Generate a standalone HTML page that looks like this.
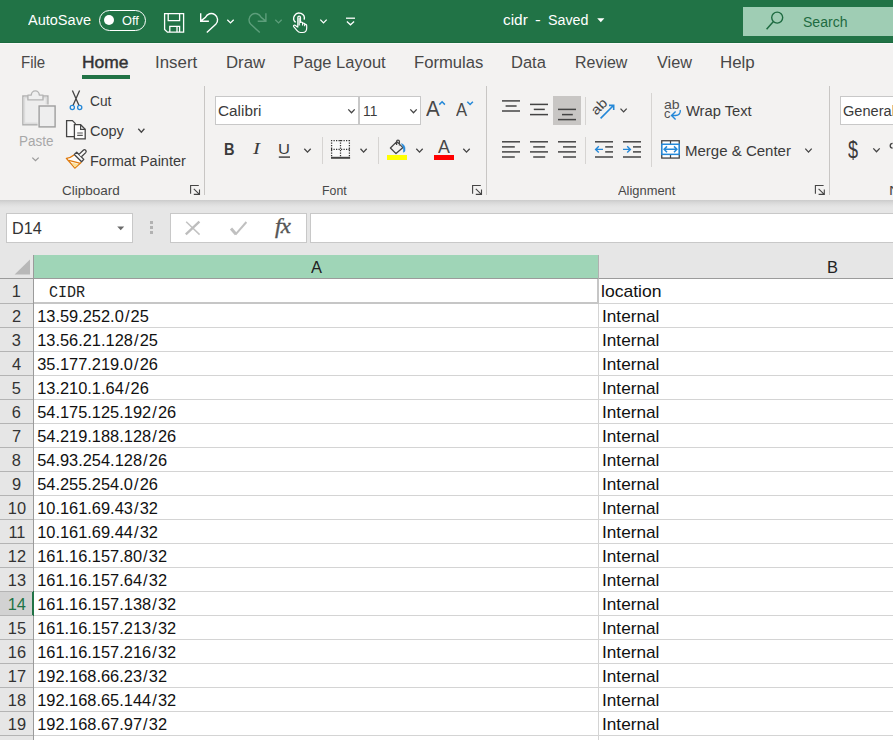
<!DOCTYPE html>
<html lang="en"><head><meta charset="utf-8"><title>cidr - Excel</title>
<style>
html,body{margin:0;padding:0;}
body{width:893px;height:740px;overflow:hidden;background:#fff;font-family:"Liberation Sans",sans-serif;}
#app{position:relative;width:893px;height:740px;overflow:hidden;background:#fff;}
.t{position:absolute;white-space:pre;line-height:30px;height:30px;transform-origin:0 50%;}
.b{position:absolute;}
#title{left:0;top:0;width:893px;height:43px;background:#217346;}
#ribbon{left:0;top:43px;width:893px;height:157px;background:#f3f2f1;}
#shadow{left:0;top:200px;width:893px;height:8px;background:linear-gradient(#cbcbcb,#d9d9d9 35%,#e3e3e3 75%,#e6e6e6);}
#fbar{left:0;top:208px;width:893px;height:47px;background:#e6e6e6;}
.box{background:#fff;border:1px solid #c8c8c8;box-sizing:border-box;}
.sep{width:1px;background:#c8c6c4;}
svg{position:absolute;overflow:visible;}
.hl{position:absolute;left:34px;width:859px;height:1px;background:#d6d6d6;}

</style></head>
<body>
<div id="app">
<div class="b" id="title"></div>
<div class="b" id="ribbon"></div>
<div class="b" id="shadow"></div>
<div class="b" id="fbar"></div>
<div class="b" style="left:0px;top:42px;width:893px;height:1px;background:#1b6b3f;"></div>
<div class="b" style="left:0px;top:43px;width:893px;height:1px;background:#fbfaf9;"></div>
<div class="b" style="left:743px;top:7px;width:150px;height:29px;background:#9fcdb4;"></div>
<div class="b" style="left:99px;top:10px;width:47px;height:20.5px;border:1.6px solid #fff;border-radius:11px;box-sizing:border-box;"></div>
<div class="b" style="left:104px;top:15.2px;width:10px;height:10px;border-radius:5px;background:#fff;"></div>
<div class="b" style="left:82px;top:75px;width:47.5px;height:3.6px;background:#217346;"></div>
<div class="b" style="left:204px;top:86px;width:1px;height:108.5px;background:#c8c6c4;"></div>
<div class="b" style="left:486px;top:86px;width:1px;height:108.5px;background:#c8c6c4;"></div>
<div class="b" style="left:829px;top:86px;width:1px;height:108.5px;background:#c8c6c4;"></div>
<div class="b" style="left:322px;top:137px;width:1px;height:27px;background:#d6d4d2;"></div>
<div class="b" style="left:378px;top:137px;width:1px;height:27px;background:#d6d4d2;"></div>
<div class="b" style="left:585px;top:97px;width:1px;height:27.5px;background:#d6d4d2;"></div>
<div class="b" style="left:585px;top:137px;width:1px;height:27px;background:#d6d4d2;"></div>
<div class="b" style="left:651px;top:93px;width:1px;height:74px;background:#d6d4d2;"></div>
<div class="b box" style="left:215px;top:96px;width:144px;height:29px;"></div>
<div class="b box" style="left:359px;top:96px;width:62px;height:29px;"></div>
<div class="b box" style="left:840px;top:96px;width:60px;height:29px;"></div>
<div class="b" style="left:553px;top:96px;width:28px;height:29px;background:#c8c6c4;"></div>
<div class="b box" style="left:6px;top:213px;width:127px;height:30px;"></div>
<div class="b box" style="left:170px;top:213px;width:137px;height:30px;"></div>
<div class="b box" style="left:310px;top:213px;width:590px;height:30px;"></div>
<div class="b" style="left:0px;top:255px;width:893px;height:24px;background:#e6e6e6;"></div>
<div class="b" style="left:34px;top:255px;width:564px;height:23px;background:#9fd5b7;"></div>
<div class="b" style="left:0px;top:278px;width:893px;height:1px;background:#9b9b9b;"></div>
<div class="b" style="left:598px;top:255px;width:1px;height:24px;background:#b0b0b0;"></div>
<div class="b" style="left:0px;top:279px;width:33px;height:461px;background:#e6e6e6;"></div>
<div class="b" style="left:0px;top:592px;width:33px;height:23px;background:#d2d2d2;"></div>
<div class="b" style="left:33px;top:255px;width:1px;height:485px;background:#9b9b9b;"></div>
<div class="b" style="left:32px;top:591px;width:2px;height:25px;background:#217346;"></div>
<div class="b" style="left:34px;top:303px;width:859px;height:1px;background:#d4d4d4;"></div>
<div class="b" style="left:0px;top:303px;width:33px;height:1px;background:#b4b4b4;"></div>
<div class="b" style="left:34px;top:327px;width:859px;height:1px;background:#d4d4d4;"></div>
<div class="b" style="left:0px;top:327px;width:33px;height:1px;background:#b4b4b4;"></div>
<div class="b" style="left:34px;top:351px;width:859px;height:1px;background:#d4d4d4;"></div>
<div class="b" style="left:0px;top:351px;width:33px;height:1px;background:#b4b4b4;"></div>
<div class="b" style="left:34px;top:375px;width:859px;height:1px;background:#d4d4d4;"></div>
<div class="b" style="left:0px;top:375px;width:33px;height:1px;background:#b4b4b4;"></div>
<div class="b" style="left:34px;top:399px;width:859px;height:1px;background:#d4d4d4;"></div>
<div class="b" style="left:0px;top:399px;width:33px;height:1px;background:#b4b4b4;"></div>
<div class="b" style="left:34px;top:423px;width:859px;height:1px;background:#d4d4d4;"></div>
<div class="b" style="left:0px;top:423px;width:33px;height:1px;background:#b4b4b4;"></div>
<div class="b" style="left:34px;top:447px;width:859px;height:1px;background:#d4d4d4;"></div>
<div class="b" style="left:0px;top:447px;width:33px;height:1px;background:#b4b4b4;"></div>
<div class="b" style="left:34px;top:471px;width:859px;height:1px;background:#d4d4d4;"></div>
<div class="b" style="left:0px;top:471px;width:33px;height:1px;background:#b4b4b4;"></div>
<div class="b" style="left:34px;top:495px;width:859px;height:1px;background:#d4d4d4;"></div>
<div class="b" style="left:0px;top:495px;width:33px;height:1px;background:#b4b4b4;"></div>
<div class="b" style="left:34px;top:519px;width:859px;height:1px;background:#d4d4d4;"></div>
<div class="b" style="left:0px;top:519px;width:33px;height:1px;background:#b4b4b4;"></div>
<div class="b" style="left:34px;top:543px;width:859px;height:1px;background:#d4d4d4;"></div>
<div class="b" style="left:0px;top:543px;width:33px;height:1px;background:#b4b4b4;"></div>
<div class="b" style="left:34px;top:567px;width:859px;height:1px;background:#d4d4d4;"></div>
<div class="b" style="left:0px;top:567px;width:33px;height:1px;background:#b4b4b4;"></div>
<div class="b" style="left:34px;top:591px;width:859px;height:1px;background:#d4d4d4;"></div>
<div class="b" style="left:0px;top:591px;width:33px;height:1px;background:#b4b4b4;"></div>
<div class="b" style="left:34px;top:615px;width:859px;height:1px;background:#d4d4d4;"></div>
<div class="b" style="left:0px;top:615px;width:33px;height:1px;background:#b4b4b4;"></div>
<div class="b" style="left:34px;top:639px;width:859px;height:1px;background:#d4d4d4;"></div>
<div class="b" style="left:0px;top:639px;width:33px;height:1px;background:#b4b4b4;"></div>
<div class="b" style="left:34px;top:663px;width:859px;height:1px;background:#d4d4d4;"></div>
<div class="b" style="left:0px;top:663px;width:33px;height:1px;background:#b4b4b4;"></div>
<div class="b" style="left:34px;top:687px;width:859px;height:1px;background:#d4d4d4;"></div>
<div class="b" style="left:0px;top:687px;width:33px;height:1px;background:#b4b4b4;"></div>
<div class="b" style="left:34px;top:711px;width:859px;height:1px;background:#d4d4d4;"></div>
<div class="b" style="left:0px;top:711px;width:33px;height:1px;background:#b4b4b4;"></div>
<div class="b" style="left:34px;top:735px;width:859px;height:1px;background:#d4d4d4;"></div>
<div class="b" style="left:0px;top:735px;width:33px;height:1px;background:#b4b4b4;"></div>
<div class="b" style="left:598px;top:279px;width:1px;height:461px;background:#d4d4d4;"></div>
<div class="b" style="left:34px;top:302px;width:565px;height:2px;background:#c6c6c6;"></div>
<div class="b" style="left:597px;top:279px;width:2px;height:25px;background:#c6c6c6;"></div>
<div class="b" style="left:387px;top:155px;width:20.4px;height:5px;background:#ffff00;"></div>
<div class="b" style="left:434px;top:155px;width:20.4px;height:5px;background:#ff0000;"></div>
<svg style="left:0;top:0" width="893" height="740" viewBox="0 0 893 740" fill="none" stroke-linecap="butt" stroke-linejoin="miter"><path d="M164.6 13.6 H183.6 V32.2 H167.4 L164.6 29.4 Z M168.2 13.6 V20.6 H179.6 V13.6 M169.8 32.2 V26.4 H179.6 V32.2 M177 26.4 V32.2" stroke="#fff" stroke-width="1.3"/><path d="M206.8 32.6 L215.75 24.25 A6.3 6.3 0 1 0 205.5 17.3 L201 20.9 M200.7 13.2 V21.2 H208.9" stroke="#fff" stroke-width="1.4"/><path d="M227.30 19.8 L230.50 22.9 L233.70 19.8" stroke="#fff" stroke-width="1.3"/><g transform="translate(466.6 0) scale(-1 1)"><path d="M206.8 32.6 L215.75 24.25 A6.3 6.3 0 1 0 205.5 17.3 L201 20.9 M200.7 13.2 V21.2 H208.9" stroke="#5d9e7b" stroke-width="1.4"/></g><path d="M275.30 19.8 L278.50 22.9 L281.70 19.8" stroke="#5d9e7b" stroke-width="1.3"/><path d="M295.6 22.4 A5.3 5.3 0 1 1 304.2 19.6" stroke="#fff" stroke-width="1.4"/><path d="M297.8 27.6 V17.4 a1.35 1.35 0 0 1 2.7 0 V23 M300.5 22.3 c1.2 -0.4 2 0 2.1 1 c1.1 -0.4 2 0 2.1 1 c1.2 -0.3 2 0.3 2 1.4 V28 c0 2.6 -1.6 4.5 -4 4.5 h-2.2 c-1.5 0 -2.4 -0.6 -3.4 -1.8 l-3.4 -4 c-0.7 -0.9 0.4 -2 1.4 -1.4 l2.7 1.9 M302.6 23.3 V25.6 M304.7 24.3 V26.2" stroke="#fff" stroke-width="1.2" stroke-linejoin="round"/><rect x="298.2" y="17.5" width="1.9" height="8" fill="#cfe3d7"/><path d="M320.30 19.6 L323.50 22.9 L326.70 19.6" stroke="#fff" stroke-width="1.3"/><path d="M346 18.2 H355" stroke="#fff" stroke-width="1.3"/><path d="M346.90 21.6 L350.50 24.8 L354.10 21.6" stroke="#fff" stroke-width="1.3"/><path d="M597.2 18.2 H604.4 L600.8 22.2 Z" fill="#fff"/><circle cx="777.2" cy="17.6" r="5.5" stroke="#1e6b41" stroke-width="1.4"/><path d="M773.2 21.8 L766.6 29.2" stroke="#1e6b41" stroke-width="1.5"/><rect x="22.9" y="96" width="25" height="28.8" fill="#ededed" stroke="#adadad" stroke-width="1.4"/><rect x="24.4" y="97.5" width="22" height="25.8" fill="none" stroke="#dcdcdc" stroke-width="1.5"/><path d="M27.9 95.1 H31.3 a4 4.2 0 0 1 8 0 H43 V99.9 H27.9 Z" fill="#efefef" stroke="#b4b4b4" stroke-width="1.4" stroke-linejoin="round"/><rect x="37.6" y="104.5" width="19" height="24" fill="#f3f2f1"/><rect x="39.1" y="106" width="16" height="20.9" fill="#eeeeee" stroke="#9e9e9e" stroke-width="1.4"/><path d="M32.30 157.6 L35.50 160.7 L38.70 157.6" stroke="#9a9a9a" stroke-width="1.3"/><path d="M72.4 90.4 L78.9 105.2 M79.6 90.4 L73.1 105.2" stroke="#444" stroke-width="1.3"/><circle cx="72.3" cy="107.5" r="2.1" stroke="#2488d8" stroke-width="1.3"/><circle cx="79.7" cy="107.5" r="2.1" stroke="#2488d8" stroke-width="1.3"/><path d="M74 136.6 H66.6 V120.6 H72.4 L75.2 123.4 V124.6" stroke="#444" stroke-width="1.3" fill="#fafafa"/><path d="M74.4 124.7 H80.6 L85.2 129.3 V138.8 H74.4 Z" stroke="#444" stroke-width="1.3" fill="#fdfdfd"/><path d="M80.6 124.7 V129.3 H85.2" stroke="#444" stroke-width="1.2"/><path d="M77.2 133 H82.8 M77.2 135.4 H82.8" stroke="#555" stroke-width="1.1"/><path d="M74 155 Q70 158.2 66.4 158.4 L74.9 168.1 L81.3 162.2" fill="#fdfcfb" stroke="#e07a0c" stroke-width="1.4" stroke-linejoin="round"/><path d="M71.4 162.4 L78.6 164.2 L74.9 167.4 Z" fill="#fbe096" stroke="none"/><path d="M68.8 160.3 L79.6 163.2" stroke="#e07a0c" stroke-width="1.2"/><path d="M74.3 154.5 L76.7 152.3 L83.8 159.4 L81.6 161.8 Z" fill="#fafafa" stroke="#444" stroke-width="1.3" stroke-linejoin="round"/><path d="M79 154.4 L83.3 150.2 a1.7 1.7 0 0 1 2.4 2.4 L81.4 156.8" fill="#fafafa" stroke="#444" stroke-width="1.3" stroke-linejoin="round"/><path d="M138.30 128.8 L141.35 132.2 L144.40 128.8" stroke="#444" stroke-width="1.3"/><path d="M190.6 193.7 V185.5 H198.79999999999998" stroke="#444" stroke-width="1.1"/><path d="M193.79999999999998 188.9 L199.2 194.1 M199.5 189.5 V194.4 H193.79999999999998" stroke="#444" stroke-width="1.1"/><path d="M472.6 193.7 V185.5 H480.8" stroke="#444" stroke-width="1.1"/><path d="M475.8 188.9 L481.20000000000005 194.1 M481.5 189.5 V194.4 H475.8" stroke="#444" stroke-width="1.1"/><path d="M815.4 193.7 V185.5 H823.6" stroke="#444" stroke-width="1.1"/><path d="M818.6 188.9 L824.0 194.1 M824.3 189.5 V194.4 H818.6" stroke="#444" stroke-width="1.1"/><path d="M348.30 109.4 L351.50 112.7 L354.70 109.4" stroke="#444" stroke-width="1.3"/><path d="M410.30 109.4 L413.50 112.7 L416.70 109.4" stroke="#444" stroke-width="1.3"/><path d="M439.3 104.6 L442.1 101.8 L444.9 104.6" stroke="#2488d8" stroke-width="1.5"/><path d="M467.3 101.7 L470.1 104.5 L472.9 101.7" stroke="#2488d8" stroke-width="1.5"/><path d="M278.8 157.1 H290" stroke="#444" stroke-width="1.5"/><path d="M304.30 148.8 L307.50 152.1 L310.70 148.8" stroke="#444" stroke-width="1.3"/><rect x="331" y="140" width="19" height="17" fill="#fafafa"/><path d="M331 140.6 H350 M331 149.4 H350 M331.6 140 V157 M340.5 140 V157 M349.4 140 V157" stroke="#333" stroke-width="1.25" stroke-dasharray="1.25 1.25"/><path d="M331 157.8 H350.1" stroke="#444" stroke-width="2"/><path d="M360.50 148.8 L363.60 152.1 L366.70 148.8" stroke="#444" stroke-width="1.3"/><path d="M390.4 148 L396.8 141.6 L403 147.6 L396 153.6 Z M396.6 145 V141.6 a1.4 1.4 0 0 1 2.8 0 V145.4" stroke="#444" stroke-width="1.3" stroke-linejoin="round"/><path d="M401.4 143.6 C404.2 144.4 405.4 147 405 150.2 C404.8 151.6 404.2 152.2 403.4 152.2 C403.8 149.4 403.2 146.4 401.4 143.6 Z" fill="#2488d8" stroke="#2488d8" stroke-width="0.5"/><path d="M416.30 148.8 L419.50 152.1 L422.70 148.8" stroke="#444" stroke-width="1.3"/><path d="M463.30 148.8 L466.50 152.1 L469.70 148.8" stroke="#444" stroke-width="1.3"/><path d="M502 100.9 H520" stroke="#444" stroke-width="1.5"/><path d="M505.6 106.0 H516.6" stroke="#444" stroke-width="1.5"/><path d="M502 111.0 H520" stroke="#444" stroke-width="1.5"/><path d="M530 104.4 H548" stroke="#444" stroke-width="1.5"/><path d="M533.8 109.4 H544.8" stroke="#444" stroke-width="1.5"/><path d="M530 114.6 H548" stroke="#444" stroke-width="1.5"/><path d="M558 109.4 H576" stroke="#444" stroke-width="1.5"/><path d="M562 114.6 H572.8" stroke="#444" stroke-width="1.5"/><path d="M558 119.6 H576" stroke="#444" stroke-width="1.5"/><path d="M502 141.8 H520" stroke="#444" stroke-width="1.5"/><path d="M502 146.9 H514.8" stroke="#444" stroke-width="1.5"/><path d="M502 151.9 H520" stroke="#444" stroke-width="1.5"/><path d="M502 157.0 H514.8" stroke="#444" stroke-width="1.5"/><path d="M530 141.8 H548" stroke="#444" stroke-width="1.5"/><path d="M533.2 146.9 H545.2" stroke="#444" stroke-width="1.5"/><path d="M530 151.9 H548" stroke="#444" stroke-width="1.5"/><path d="M533.2 157.0 H545.2" stroke="#444" stroke-width="1.5"/><path d="M558 141.8 H576" stroke="#444" stroke-width="1.5"/><path d="M563 146.9 H576" stroke="#444" stroke-width="1.5"/><path d="M558 151.9 H576" stroke="#444" stroke-width="1.5"/><path d="M563 157.0 H576" stroke="#444" stroke-width="1.5"/><path d="M595 141.8 H613" stroke="#444" stroke-width="1.5"/><path d="M605.2 146.9 H613" stroke="#444" stroke-width="1.5"/><path d="M605.2 151.9 H613" stroke="#444" stroke-width="1.5"/><path d="M595 157.0 H613" stroke="#444" stroke-width="1.5"/><path d="M595.6 149.4 H603 M598.8 146.2 L595.6 149.4 L598.8 152.6" stroke="#2488d8" stroke-width="1.4"/><path d="M623 141.8 H641" stroke="#444" stroke-width="1.5"/><path d="M633 146.9 H641" stroke="#444" stroke-width="1.5"/><path d="M633 151.9 H641" stroke="#444" stroke-width="1.5"/><path d="M623 157.0 H641" stroke="#444" stroke-width="1.5"/><path d="M623 149.4 H630.4 M627.2 146.2 L630.4 149.4 L627.2 152.6" stroke="#2488d8" stroke-width="1.4"/><path d="M600.6 118.4 L613.2 105.8 M609 105.4 H613.7 V110" stroke="#2488d8" stroke-width="1.6"/><path d="M620.50 108.6 L623.60 111.9 L626.70 108.6" stroke="#444" stroke-width="1.3"/><path d="M680.2 110 c0.7 3.4 -1.6 5.5 -4.6 5.5 H672 M675.6 111.4 L671.5 115.5 L675.6 119.6" stroke="#2488d8" stroke-width="1.4"/><rect x="661.75" y="140.75" width="17.5" height="17.3" fill="#fff" stroke="#444" stroke-width="1.3"/><path d="M670.5 141 V144.4 M670.5 154.4 V158" stroke="#444" stroke-width="1.2"/><rect x="661.85" y="144.25" width="17.3" height="10.1" fill="#fff" stroke="#2488d8" stroke-width="1.5"/><path d="M664.2 149.3 H676.8 M667 146.4 L664.1 149.3 L667 152.2 M674 146.4 L676.9 149.3 L674 152.2" stroke="#2488d8" stroke-width="1.5"/><path d="M805.30 148.6 L808.50 152.1 L811.70 148.6" stroke="#444" stroke-width="1.3"/><path d="M873.30 148.4 L876.50 151.7 L879.70 148.4" stroke="#444" stroke-width="1.3"/><path d="M892.6 143.4 a2.4 2.4 0 0 0 0 4.8" stroke="#444" stroke-width="1.3"/><path d="M117.2 226.4 H124.2 L120.7 230.2 Z" fill="#6a6a6a"/><rect x="150" y="221" width="3" height="3" fill="#b2b2b2"/><rect x="150" y="226" width="3" height="3" fill="#b2b2b2"/><rect x="150" y="231" width="3" height="3" fill="#b2b2b2"/><path d="M186.2 221.8 L199.6 234.6" stroke="#c2c2c2" stroke-width="1.5"/><path d="M199.4 221.6 L185.8 234.4" stroke="#bdbdbd" stroke-width="2.3"/><path d="M231 228.6 L236 234.2" stroke="#c0c0c0" stroke-width="3"/><path d="M235.4 234.6 L246.4 222" stroke="#c0c0c0" stroke-width="2"/><path d="M30 259.4 V274.6 H14.6 Z" fill="#b8b8b8"/></svg>
<span class="t" style="left:28.20px;top:5.199999999999999px;font-size:15.5px;color:#fff;font-family:'Liberation Sans', sans-serif;transform:scaleX(0.9368);">AutoSave</span>
<span class="t" style="left:122.29px;top:5.600000000000001px;font-size:12.6px;color:#fff;font-family:'Liberation Sans', sans-serif;transform:scaleX(1.0125);">Off</span>
<span class="t" style="left:502.65px;top:4.800000000000001px;font-size:15.3px;color:#fff;font-family:'Liberation Sans', sans-serif;transform:scaleX(1.0063);">cidr</span>
<span class="t" style="left:535.36px;top:4.800000000000001px;font-size:15.3px;color:#fff;font-family:'Liberation Sans', sans-serif;transform:scaleX(1.1200);">-</span>
<span class="t" style="left:547.80px;top:4.800000000000001px;font-size:15.3px;color:#fff;font-family:'Liberation Sans', sans-serif;transform:scaleX(0.9317);">Saved</span>
<span class="t" style="left:803.01px;top:6.600000000000001px;font-size:15.3px;color:#1e6b41;font-family:'Liberation Sans', sans-serif;transform:scaleX(0.9176);">Search</span>
<span class="t" style="left:20.79px;top:47.0px;font-size:17.2px;color:#484848;font-family:'Liberation Sans', sans-serif;transform:scaleX(0.8745);">File</span>
<span class="t" style="left:81.94px;top:47.0px;font-size:17.2px;color:#333;font-family:'Liberation Sans', sans-serif;-webkit-text-stroke:0.45px #333;transform:scaleX(1.0114);">Home</span>
<span class="t" style="left:155.33px;top:47.0px;font-size:17.2px;color:#484848;font-family:'Liberation Sans', sans-serif;transform:scaleX(0.9818);">Insert</span>
<span class="t" style="left:225.54px;top:47.0px;font-size:17.2px;color:#484848;font-family:'Liberation Sans', sans-serif;transform:scaleX(0.9740);">Draw</span>
<span class="t" style="left:293.26px;top:47.0px;font-size:17.2px;color:#484848;font-family:'Liberation Sans', sans-serif;transform:scaleX(0.9600);">Page Layout</span>
<span class="t" style="left:414.25px;top:47.0px;font-size:17.2px;color:#484848;font-family:'Liberation Sans', sans-serif;transform:scaleX(0.9683);">Formulas</span>
<span class="t" style="left:511.26px;top:47.0px;font-size:17.2px;color:#484848;font-family:'Liberation Sans', sans-serif;transform:scaleX(0.9612);">Data</span>
<span class="t" style="left:575.01px;top:47.0px;font-size:17.2px;color:#484848;font-family:'Liberation Sans', sans-serif;transform:scaleX(0.9297);">Review</span>
<span class="t" style="left:657.46px;top:47.0px;font-size:17.2px;color:#484848;font-family:'Liberation Sans', sans-serif;transform:scaleX(0.9469);">View</span>
<span class="t" style="left:720.42px;top:47.0px;font-size:17.2px;color:#484848;font-family:'Liberation Sans', sans-serif;transform:scaleX(0.9835);">Help</span>
<span class="t" style="left:18.59px;top:125.6px;font-size:15.2px;color:#a8a8a8;font-family:'Liberation Sans', sans-serif;transform:scaleX(0.8865);">Paste</span>
<span class="t" style="left:89.84px;top:85.9px;font-size:15.5px;color:#3b3b3b;font-family:'Liberation Sans', sans-serif;transform:scaleX(0.8860);">Cut</span>
<span class="t" style="left:89.70px;top:115.80000000000001px;font-size:15.5px;color:#3b3b3b;font-family:'Liberation Sans', sans-serif;transform:scaleX(0.9362);">Copy</span>
<span class="t" style="left:89.63px;top:146.1px;font-size:15.5px;color:#3b3b3b;font-family:'Liberation Sans', sans-serif;transform:scaleX(0.9347);">Format Painter</span>
<span class="t" style="left:62.41px;top:175.8px;font-size:12.8px;color:#484848;font-family:'Liberation Sans', sans-serif;transform:scaleX(1.0554);">Clipboard</span>
<span class="t" style="left:321.84px;top:175.8px;font-size:12.8px;color:#484848;font-family:'Liberation Sans', sans-serif;transform:scaleX(0.9633);">Font</span>
<span class="t" style="left:618.20px;top:175.8px;font-size:12.8px;color:#484848;font-family:'Liberation Sans', sans-serif;transform:scaleX(1.0079);">Alignment</span>
<span class="t" style="left:888.76px;top:175.8px;font-size:12.8px;color:#484848;font-family:'Liberation Sans', sans-serif;transform:scaleX(1.2414);">N</span>
<span class="t" style="left:218.04px;top:95.6px;font-size:15.2px;color:#3b3b3b;font-family:'Liberation Sans', sans-serif;transform:scaleX(1.0085);">Calibri</span>
<span class="t" style="left:363.06px;top:95.6px;font-size:15.2px;color:#3b3b3b;font-family:'Liberation Sans', sans-serif;transform:scaleX(0.9091);">11</span>
<span class="t" style="left:223.90px;top:133.8px;font-size:16.2px;color:#3b3b3b;font-family:'Liberation Sans', sans-serif;font-weight:bold;transform:scaleX(0.9000);">B</span>
<span class="t" style="left:253.10px;top:133.8px;font-size:16.6px;color:#3b3b3b;font-family:'Liberation Serif', serif;font-style:italic;transform:scaleX(1.2640);">I</span>
<span class="t" style="left:278.42px;top:133.6px;font-size:15px;color:#3b3b3b;font-family:'Liberation Sans', sans-serif;transform:scaleX(1.1059);">U</span>
<span class="t" style="left:426.30px;top:93.3px;font-size:22.8px;color:#484848;font-family:'Liberation Sans', sans-serif;transform:scaleX(0.8984);">A</span>
<span class="t" style="left:456.30px;top:95.0px;font-size:17.9px;color:#484848;font-family:'Liberation Sans', sans-serif;transform:scaleX(0.9277);">A</span>
<span class="t" style="left:438.40px;top:132.2px;font-size:19.1px;color:#484848;font-family:'Liberation Sans', sans-serif;transform:scaleX(0.9333);">A</span>
<span class="t" style="left:685.90px;top:95.9px;font-size:15.4px;color:#3b3b3b;font-family:'Liberation Sans', sans-serif;transform:scaleX(0.9562);">Wrap Text</span>
<span class="t" style="left:685.38px;top:136.0px;font-size:15.4px;color:#3b3b3b;font-family:'Liberation Sans', sans-serif;transform:scaleX(0.9753);">Merge &amp; Center</span>
<span class="t" style="left:842.88px;top:95.6px;font-size:15.2px;color:#3b3b3b;font-family:'Liberation Sans', sans-serif;transform:scaleX(0.9608);">General</span>
<span class="t" style="left:848.21px;top:135.2px;font-size:23.5px;color:#3b3b3b;font-family:'Liberation Sans', sans-serif;transform:scaleX(0.7680);">$</span>
<span class="t" style="left:664.17px;top:90.2px;font-size:13.2px;color:#505050;font-family:'Liberation Sans', sans-serif;transform:scaleX(1.0667);">ab</span>
<span class="t" style="left:664.21px;top:99.0px;font-size:13.2px;color:#505050;font-family:'Liberation Sans', sans-serif;transform:scaleX(0.9739);">c</span>
<span class="t" style="left:592.30px;top:91.90px;font-size:13.5px;color:#444;font-family:'Liberation Sans', sans-serif;transform-origin:7.50px 50%;transform:rotate(-45.0deg) scaleX(1.1286);">ab</span>
<span class="t" style="left:274.80px;top:210.8px;font-size:20.5px;color:#555;font-family:'Liberation Serif', serif;font-style:italic;-webkit-text-stroke:0.35px #555;letter-spacing:-0.6px;transform:scaleX(1.1088);">fx</span>
<span class="t" style="left:12.22px;top:213.8px;font-size:15.8px;color:#333;font-family:'Liberation Sans', sans-serif;transform:scaleX(1.0275);">D14</span>
<span class="t" style="left:311.00px;top:252.60000000000002px;font-size:16.8px;color:#222;font-family:'Liberation Sans', sans-serif;transform:scaleX(0.9778);">A</span>
<span class="t" style="left:826.78px;top:252.7px;font-size:16.8px;color:#222;font-family:'Liberation Sans', sans-serif;transform:scaleX(0.9778);">B</span>
<span class="t" style="left:48.68px;top:277.6px;font-size:15.6px;color:#222;font-family:'Liberation Mono', monospace;transform:scaleX(0.9655);">CIDR</span>
<span class="t" style="left:601.43px;top:276.0px;font-size:16.4px;color:#111;font-family:'Liberation Sans', sans-serif;transform:scaleX(1.0716);">location</span>
<span class="t" style="left:37.20px;top:301.0px;font-size:16.4px;color:#111;font-family:'Liberation Sans', sans-serif;">13.59.252.0<span style="margin:0 1.1px">/</span>25</span>
<span class="t" style="left:601.82px;top:301.0px;font-size:16.4px;color:#111;font-family:'Liberation Sans', sans-serif;transform:scaleX(1.0500);">Internal</span>
<span class="t" style="left:37.20px;top:325.0px;font-size:16.4px;color:#111;font-family:'Liberation Sans', sans-serif;">13.56.21.128<span style="margin:0 1.1px">/</span>25</span>
<span class="t" style="left:601.82px;top:325.0px;font-size:16.4px;color:#111;font-family:'Liberation Sans', sans-serif;transform:scaleX(1.0500);">Internal</span>
<span class="t" style="left:37.20px;top:349.0px;font-size:16.4px;color:#111;font-family:'Liberation Sans', sans-serif;">35.177.219.0<span style="margin:0 1.1px">/</span>26</span>
<span class="t" style="left:601.82px;top:349.0px;font-size:16.4px;color:#111;font-family:'Liberation Sans', sans-serif;transform:scaleX(1.0500);">Internal</span>
<span class="t" style="left:37.20px;top:373.0px;font-size:16.4px;color:#111;font-family:'Liberation Sans', sans-serif;">13.210.1.64<span style="margin:0 1.1px">/</span>26</span>
<span class="t" style="left:601.82px;top:373.0px;font-size:16.4px;color:#111;font-family:'Liberation Sans', sans-serif;transform:scaleX(1.0500);">Internal</span>
<span class="t" style="left:37.20px;top:397.0px;font-size:16.4px;color:#111;font-family:'Liberation Sans', sans-serif;">54.175.125.192<span style="margin:0 1.1px">/</span>26</span>
<span class="t" style="left:601.82px;top:397.0px;font-size:16.4px;color:#111;font-family:'Liberation Sans', sans-serif;transform:scaleX(1.0500);">Internal</span>
<span class="t" style="left:37.20px;top:421.0px;font-size:16.4px;color:#111;font-family:'Liberation Sans', sans-serif;">54.219.188.128<span style="margin:0 1.1px">/</span>26</span>
<span class="t" style="left:601.82px;top:421.0px;font-size:16.4px;color:#111;font-family:'Liberation Sans', sans-serif;transform:scaleX(1.0500);">Internal</span>
<span class="t" style="left:37.20px;top:445.0px;font-size:16.4px;color:#111;font-family:'Liberation Sans', sans-serif;">54.93.254.128<span style="margin:0 1.1px">/</span>26</span>
<span class="t" style="left:601.82px;top:445.0px;font-size:16.4px;color:#111;font-family:'Liberation Sans', sans-serif;transform:scaleX(1.0500);">Internal</span>
<span class="t" style="left:37.20px;top:469.0px;font-size:16.4px;color:#111;font-family:'Liberation Sans', sans-serif;">54.255.254.0<span style="margin:0 1.1px">/</span>26</span>
<span class="t" style="left:601.82px;top:469.0px;font-size:16.4px;color:#111;font-family:'Liberation Sans', sans-serif;transform:scaleX(1.0500);">Internal</span>
<span class="t" style="left:37.20px;top:493.0px;font-size:16.4px;color:#111;font-family:'Liberation Sans', sans-serif;">10.161.69.43<span style="margin:0 1.1px">/</span>32</span>
<span class="t" style="left:601.82px;top:493.0px;font-size:16.4px;color:#111;font-family:'Liberation Sans', sans-serif;transform:scaleX(1.0500);">Internal</span>
<span class="t" style="left:37.20px;top:517.0px;font-size:16.4px;color:#111;font-family:'Liberation Sans', sans-serif;">10.161.69.44<span style="margin:0 1.1px">/</span>32</span>
<span class="t" style="left:601.82px;top:517.0px;font-size:16.4px;color:#111;font-family:'Liberation Sans', sans-serif;transform:scaleX(1.0500);">Internal</span>
<span class="t" style="left:37.20px;top:541.0px;font-size:16.4px;color:#111;font-family:'Liberation Sans', sans-serif;">161.16.157.80<span style="margin:0 1.1px">/</span>32</span>
<span class="t" style="left:601.82px;top:541.0px;font-size:16.4px;color:#111;font-family:'Liberation Sans', sans-serif;transform:scaleX(1.0500);">Internal</span>
<span class="t" style="left:37.20px;top:565.0px;font-size:16.4px;color:#111;font-family:'Liberation Sans', sans-serif;">161.16.157.64<span style="margin:0 1.1px">/</span>32</span>
<span class="t" style="left:601.82px;top:565.0px;font-size:16.4px;color:#111;font-family:'Liberation Sans', sans-serif;transform:scaleX(1.0500);">Internal</span>
<span class="t" style="left:37.20px;top:589.0px;font-size:16.4px;color:#111;font-family:'Liberation Sans', sans-serif;">161.16.157.138<span style="margin:0 1.1px">/</span>32</span>
<span class="t" style="left:601.82px;top:589.0px;font-size:16.4px;color:#111;font-family:'Liberation Sans', sans-serif;transform:scaleX(1.0500);">Internal</span>
<span class="t" style="left:37.20px;top:613.0px;font-size:16.4px;color:#111;font-family:'Liberation Sans', sans-serif;">161.16.157.213<span style="margin:0 1.1px">/</span>32</span>
<span class="t" style="left:601.82px;top:613.0px;font-size:16.4px;color:#111;font-family:'Liberation Sans', sans-serif;transform:scaleX(1.0500);">Internal</span>
<span class="t" style="left:37.20px;top:637.0px;font-size:16.4px;color:#111;font-family:'Liberation Sans', sans-serif;">161.16.157.216<span style="margin:0 1.1px">/</span>32</span>
<span class="t" style="left:601.82px;top:637.0px;font-size:16.4px;color:#111;font-family:'Liberation Sans', sans-serif;transform:scaleX(1.0500);">Internal</span>
<span class="t" style="left:37.20px;top:661.0px;font-size:16.4px;color:#111;font-family:'Liberation Sans', sans-serif;">192.168.66.23<span style="margin:0 1.1px">/</span>32</span>
<span class="t" style="left:601.82px;top:661.0px;font-size:16.4px;color:#111;font-family:'Liberation Sans', sans-serif;transform:scaleX(1.0500);">Internal</span>
<span class="t" style="left:37.20px;top:685.0px;font-size:16.4px;color:#111;font-family:'Liberation Sans', sans-serif;">192.168.65.144<span style="margin:0 1.1px">/</span>32</span>
<span class="t" style="left:601.82px;top:685.0px;font-size:16.4px;color:#111;font-family:'Liberation Sans', sans-serif;transform:scaleX(1.0500);">Internal</span>
<span class="t" style="left:37.20px;top:709.0px;font-size:16.4px;color:#111;font-family:'Liberation Sans', sans-serif;">192.168.67.97<span style="margin:0 1.1px">/</span>32</span>
<span class="t" style="left:601.82px;top:709.0px;font-size:16.4px;color:#111;font-family:'Liberation Sans', sans-serif;transform:scaleX(1.0500);">Internal</span>
<span class="t" style="left:11.65px;top:276.0px;font-size:16.4px;color:#333;font-family:'Liberation Sans', sans-serif;">1</span>
<span class="t" style="left:11.90px;top:301.0px;font-size:16.4px;color:#333;font-family:'Liberation Sans', sans-serif;">2</span>
<span class="t" style="left:11.77px;top:325.0px;font-size:16.4px;color:#333;font-family:'Liberation Sans', sans-serif;">3</span>
<span class="t" style="left:11.90px;top:349.0px;font-size:16.4px;color:#333;font-family:'Liberation Sans', sans-serif;">4</span>
<span class="t" style="left:11.77px;top:373.0px;font-size:16.4px;color:#333;font-family:'Liberation Sans', sans-serif;">5</span>
<span class="t" style="left:11.77px;top:397.0px;font-size:16.4px;color:#333;font-family:'Liberation Sans', sans-serif;">6</span>
<span class="t" style="left:11.90px;top:421.0px;font-size:16.4px;color:#333;font-family:'Liberation Sans', sans-serif;">7</span>
<span class="t" style="left:11.77px;top:445.0px;font-size:16.4px;color:#333;font-family:'Liberation Sans', sans-serif;">8</span>
<span class="t" style="left:11.90px;top:469.0px;font-size:16.4px;color:#333;font-family:'Liberation Sans', sans-serif;">9</span>
<span class="t" style="left:7.82px;top:493.0px;font-size:16.4px;color:#333;font-family:'Liberation Sans', sans-serif;">10</span>
<span class="t" style="left:8.45px;top:517.0px;font-size:16.4px;color:#333;font-family:'Liberation Sans', sans-serif;">11</span>
<span class="t" style="left:7.82px;top:541.0px;font-size:16.4px;color:#333;font-family:'Liberation Sans', sans-serif;">12</span>
<span class="t" style="left:7.82px;top:565.0px;font-size:16.4px;color:#333;font-family:'Liberation Sans', sans-serif;">13</span>
<span class="t" style="left:7.70px;top:589.0px;font-size:16.4px;color:#217346;font-family:'Liberation Sans', sans-serif;">14</span>
<span class="t" style="left:7.82px;top:613.0px;font-size:16.4px;color:#333;font-family:'Liberation Sans', sans-serif;">15</span>
<span class="t" style="left:7.82px;top:637.0px;font-size:16.4px;color:#333;font-family:'Liberation Sans', sans-serif;">16</span>
<span class="t" style="left:7.82px;top:661.0px;font-size:16.4px;color:#333;font-family:'Liberation Sans', sans-serif;">17</span>
<span class="t" style="left:7.82px;top:685.0px;font-size:16.4px;color:#333;font-family:'Liberation Sans', sans-serif;">18</span>
<span class="t" style="left:7.82px;top:709.0px;font-size:16.4px;color:#333;font-family:'Liberation Sans', sans-serif;">19</span>
</div>
</body></html>
